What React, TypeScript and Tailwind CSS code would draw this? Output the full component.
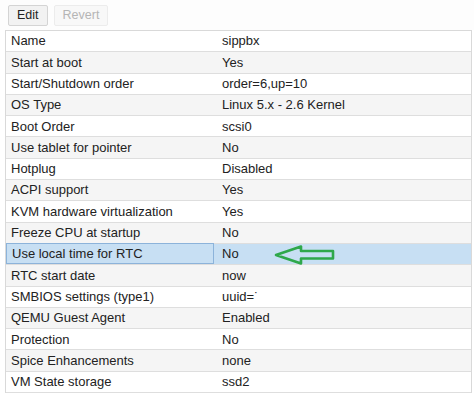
const rows: [string, string][] = [
  ["Name", "sippbx"],
  ["Start at boot", "Yes"],
  ["Start/Shutdown order", "order=6,up=10"],
  ["OS Type", "Linux 5.x - 2.6 Kernel"],
  ["Boot Order", "scsi0"],
  ["Use tablet for pointer", "No"],
  ["Hotplug", "Disabled"],
  ["ACPI support", "Yes"],
  ["KVM hardware virtualization", "Yes"],
  ["Freeze CPU at startup", "No"],
  ["Use local time for RTC", "No"],
  ["RTC start date", "now"],
  ["SMBIOS settings (type1)", "uuid=\u02d9"],
  ["QEMU Guest Agent", "Enabled"],
  ["Protection", "No"],
  ["Spice Enhancements", "none"],
  ["VM State storage", "ssd2"],
];

function Arrow() {
  return (
    <svg width="64" height="22" viewBox="0 0 64 22" className="absolute left-[267px] top-[0px]">
      <path
        d="M3 11 L28 2.5 L28 7 L60 7 L60 14.5 L28 14.5 L28 19.5 Z"
        fill="none"
        stroke="#2fa84b"
        strokeWidth="2.6"
        strokeLinejoin="round"
      />
    </svg>
  );
}

export default function App() {
  return (
    <div className="w-[474px] h-[395px] overflow-hidden bg-white font-['Liberation_Sans',Arial,sans-serif] text-[13px] text-[#222]">
      <div className="flex h-[30px] items-center gap-[6px] px-[8px] bg-[#fdfdfd]">
        <button className="h-[21px] px-[8px] rounded-[2px] border border-[#d4d4d4] bg-[#f2f2f2] text-[12.5px] text-[#222]">
          Edit
        </button>
        <button className="h-[21px] px-[8px] rounded-[2px] border border-[#ececec] bg-[#f8f8f8] text-[12.5px] text-[#b5b5b5]">
          Revert
        </button>
      </div>
      <div className="mx-[5px] mr-[2px] border-l border-r border-t border-[#d9d9d9]">
        {rows.map(([k, v], i) => {
          const sel = i === 10;
          const bg = sel ? "bg-[#c7dff3]" : i % 2 ? "bg-[#f5f5f5]" : "bg-white";
          return (
            <div key={k} className={`relative flex h-[21.3px] border-b border-[#dedede] ${bg}`}>
              <div
                className={`w-[208px] shrink-0 flex items-center pl-[5px] ${sel ? "border border-[#8cb3da] -mt-px h-[21.3px]" : ""}`}
              >
                {k}
              </div>
              <div className="flex items-center pl-[8px]">{v}</div>
              {sel && <Arrow />}
            </div>
          );
        })}
      </div>
    </div>
  );
}
